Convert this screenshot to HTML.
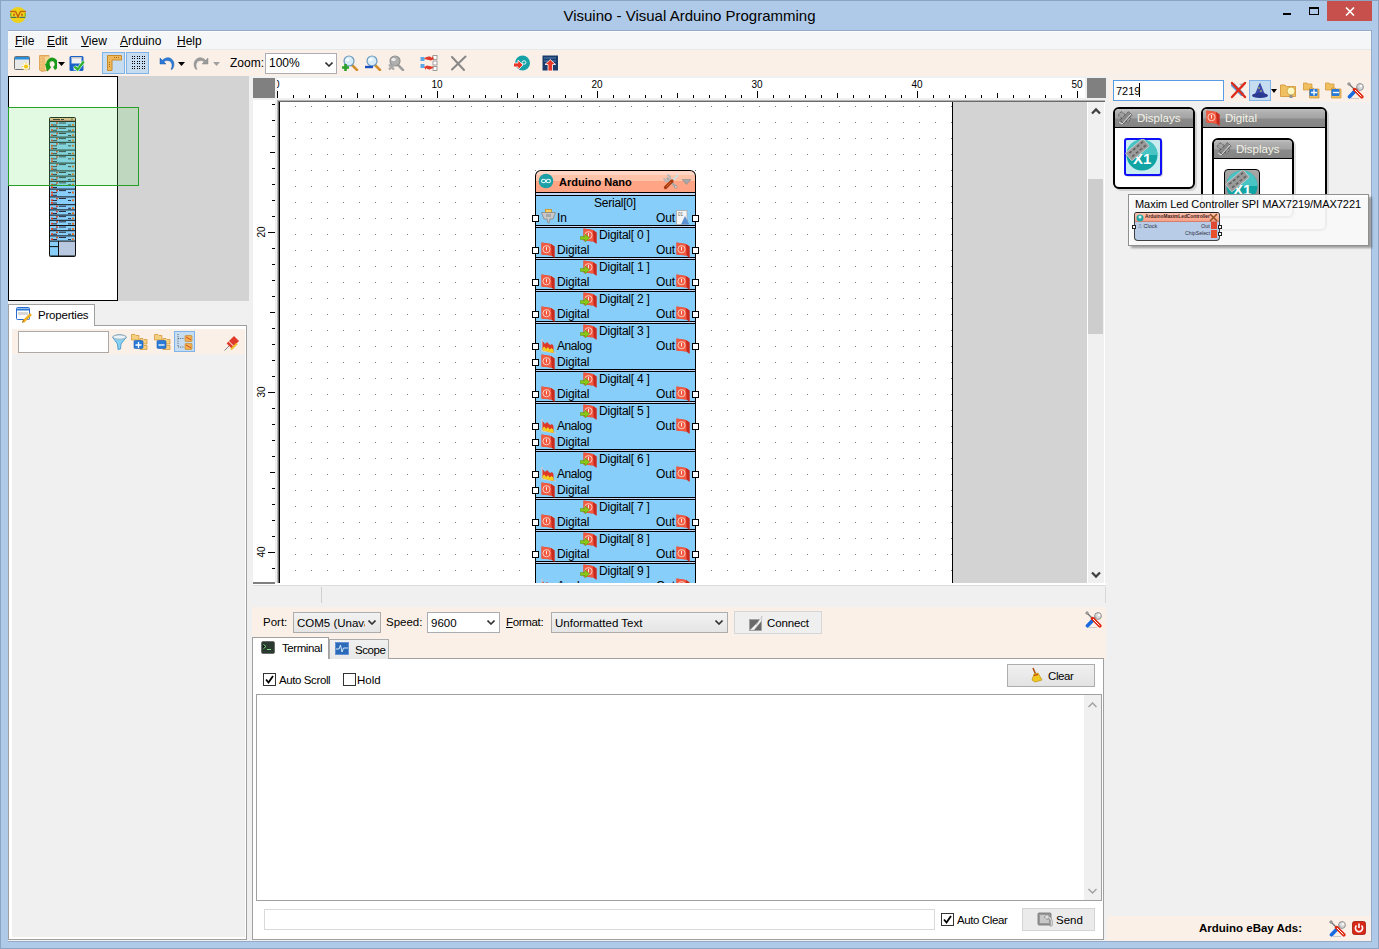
<!DOCTYPE html><html><head><meta charset="utf-8"><style>
*{box-sizing:border-box}
html,body{margin:0;padding:0}
body{width:1379px;height:949px;overflow:hidden;position:relative;background:#afcae8;font-family:"Liberation Sans",sans-serif;font-size:12px;color:#000}
.ab{position:absolute}
.t{position:absolute;white-space:nowrap;line-height:1}
</style></head><body>

<div class="ab" style="left:0;top:0;width:1379px;height:949px;border:1px solid #8aa4c2"></div>
<div class="t" style="left:0;width:1379px;top:8px;text-align:center;font-size:15px;color:#000">Visuino - Visual Arduino Programming</div>
<div class="ab" style="left:1327px;top:1px;width:45px;height:20px;background:#c7504c"></div>
<div class="ab" style="left:8px;top:30px;width:1364px;height:912px;background:#f0f0f0;border:1px solid #93abc7;border-left:none"></div>
<div class="ab" style="left:8px;top:31px;width:1363px;height:19px;background:#f5f6f7;border-top:1px solid #fcfcfd;border-bottom:1px solid #e6e9eb"></div>
<div class="ab" style="left:8px;top:50px;width:1363px;height:26px;background:#fbf0e7"></div>
<div class="ab" style="left:8px;top:76px;width:241px;height:225px;background:#d3d3d3"></div>
<div class="ab" style="left:8px;top:76px;width:110px;height:225px;background:#fff;border:1px solid #000"></div>
<div class="ab" style="left:8px;top:325px;width:239px;height:615px;background:#f0f0f0;border:1px solid #a0a0a0"></div>
<div class="ab" style="left:8px;top:304px;width:87px;height:22px;background:#fff;border:1px solid #a0a0a0;border-bottom:none"></div>
<div class="ab" style="left:12px;top:329px;width:233px;height:25px;background:#fbf0e7"></div>
<div class="ab" style="left:18px;top:331px;width:91px;height:22px;background:#fff;border:1px solid #a9a9a9"></div>
<div class="ab" style="left:253px;top:78px;width:22px;height:20px;background:#808080"></div>
<div class="ab" style="left:277px;top:78px;width:808px;height:20px;background:#fff"></div>
<div class="ab" style="left:1087px;top:78px;width:19px;height:20px;background:#808080"></div>
<div class="ab" style="left:253px;top:100px;width:22px;height:483px;background:#fff"></div>
<div class="ab" style="left:277px;top:100px;width:676px;height:483px;background:#fff"></div>
<div class="ab" style="left:277px;top:100px;width:828px;height:1px;background:#b4b4b4"></div>
<div class="ab" style="left:278px;top:101px;width:827px;height:1px;background:#6a6a6a"></div>
<div class="ab" style="left:277px;top:101px;width:1px;height:482px;background:#b8b8b8"></div>
<div class="ab" style="left:278px;top:102px;width:1px;height:481px;background:#6e6e6e"></div>
<div class="ab" style="left:279px;top:102px;width:1px;height:481px;background:#000"></div>
<div class="ab" style="left:953px;top:102px;width:134px;height:481px;background:#d3d3d3"></div>
<div class="ab" style="left:1088px;top:179px;width:15px;height:155px;background:#cdcdcd"></div>
<div class="ab" style="left:1109px;top:77px;width:261px;height:25px;background:#fbf0e7"></div>
<div class="ab" style="left:1113px;top:80px;width:111px;height:21px;background:#fff;border:1px solid #569de5"></div>
<div class="ab" style="left:1107px;top:916px;width:264px;height:25px;background:#fbf0e7"></div>
<div class="ab" style="left:252px;top:607px;width:854px;height:52px;background:#fbf0e7"></div>
<div class="ab" style="left:252px;top:658px;width:852px;height:282px;background:#fff;border:1px solid #a0a0a0"></div>
<div class="ab" style="left:252px;top:637px;width:77px;height:22px;background:#fff;border:1px solid #a0a0a0;border-bottom:none"></div>
<div class="ab" style="left:256px;top:694px;width:846px;height:207px;background:#fff;border:1px solid #a0a0a0"></div>
<div class="ab" style="left:264px;top:909px;width:671px;height:21px;background:#fff;border:1px solid #d9d9d9"></div>
<div class="t" style="left:15px;top:35.00px;font-size:12px;color:#000;letter-spacing:0px"><span style="text-decoration:underline;text-underline-offset:1px">F</span>ile</div>
<div class="t" style="left:47px;top:35.00px;font-size:12px;color:#000;letter-spacing:0px"><span style="text-decoration:underline;text-underline-offset:1px">E</span>dit</div>
<div class="t" style="left:81px;top:35.00px;font-size:12px;color:#000;letter-spacing:0px"><span style="text-decoration:underline;text-underline-offset:1px">V</span>iew</div>
<div class="t" style="left:120px;top:35.00px;font-size:12px;color:#000;letter-spacing:0px"><span style="text-decoration:underline;text-underline-offset:1px">A</span>rduino</div>
<div class="t" style="left:177px;top:35.00px;font-size:12px;color:#000;letter-spacing:0px"><span style="text-decoration:underline;text-underline-offset:1px">H</span>elp</div>
<svg class="ab" style="left:9px;top:6px" width="18" height="18" viewBox="0 0 18 18">
<circle cx="9" cy="9" r="8" fill="#ecd21a"/>
<rect x="2.5" y="6" width="5" height="5" fill="#f4dc20"/><rect x="10.5" y="6" width="5" height="5" fill="#f4dc20"/>
<path d="M1 5.5 H6.5 L9 10.5 L11.5 5.5 H17" stroke="#c8660c" stroke-width="1.5" fill="none"/>
<path d="M9 9 V12" stroke="#c0600c" stroke-width="1.6"/>
<circle cx="5" cy="8.8" r="1.2" fill="#d07010"/><circle cx="13" cy="8.8" r="1.2" fill="#d07010"/>
<path d="M1.8 11.3 H7.5 M10.5 11.3 H16.2" stroke="#1f5a6a" stroke-width="1"/>
<path d="M1.8 7 V10.5 M16.2 7 V10.5" stroke="#30a030" stroke-width="0.8"/>
</svg>
<div class="ab" style="left:1283px;top:13px;width:8px;height:2px;background:#000"></div>
<div class="ab" style="left:1309px;top:7px;width:10px;height:8px;border:1px solid #000;border-top-width:2px"></div>
<svg class="ab" style="left:1345px;top:7px" width="10" height="9" viewBox="0 0 10 9"><path d="M1 0.5 L9 8.5 M9 0.5 L1 8.5" stroke="#fff" stroke-width="1.6"/></svg>
<svg class="ab" style="left:14px;top:55px" width="17" height="16" viewBox="0 0 17 16">
<rect x="0.5" y="1.5" width="15" height="13" rx="1" fill="#e8e8e8" stroke="#707070"/>
<rect x="1" y="2" width="14" height="2.5" fill="#2a8fd8"/>
<circle cx="12" cy="11.5" r="3.6" fill="#fff"/><circle cx="12" cy="11.5" r="2" fill="#f5c400"/>
<path d="M12 7.5v1.3M12 14.2v1.3M8 11.5h1.3M14.7 11.5h1.3M9.2 8.7l.9.9M13.9 13.4l.9.9M14.8 8.7l-.9.9M9.2 14.3l.9-.9" stroke="#f5c400" stroke-width="0.9"/>
</svg>
<svg class="ab" style="left:39px;top:55px" width="18" height="17" viewBox="0 0 18 17">
<path d="M0.5 0.5 L10 0.5 L10 15 L3 16.5 L0.5 15Z" fill="#eebc70" stroke="#d89a48" stroke-width="0.8"/>
<path d="M6 2 L10 1.5 L10 14 L6 15Z" fill="#f6d898"/>
<path d="M2 2 V14" stroke="#f8e0a0" stroke-width="0.8" stroke-dasharray="1 2"/>
<path d="M9.5 11.5 A4.2 4.8 0 1 1 15 13.5" stroke="#1a9a1a" stroke-width="3.6" fill="none"/>
<path d="M6 8.5 L12.5 12 L8 16.5Z" fill="#1a9a1a"/>
<path d="M10 8 L12.5 6" stroke="#80d080" stroke-width="0.8"/>
</svg>
<svg class="ab" style="left:58px;top:62px" width="7" height="4" viewBox="0 0 7 4"><path d="M0 0h7L3.5 4z" fill="#000"/></svg>
<svg class="ab" style="left:69px;top:55px" width="16" height="17" viewBox="0 0 16 17">
<rect x="0.5" y="1" width="14" height="15" rx="1.5" fill="#1a62c8"/>
<rect x="2.5" y="2" width="10" height="6.5" fill="#f2f2f2"/><rect x="2.5" y="2" width="10" height="1.5" fill="#c8c8c8"/>
<rect x="4" y="11" width="7" height="5" fill="#4a8ae0"/><rect x="5" y="12" width="2" height="3" fill="#e0e8f8"/>
<path d="M5.5 11.5 L8.5 14.5 L14.8 6.5" stroke="#e8ffe8" stroke-width="3.4" fill="none"/>
<path d="M5.5 11.5 L8.5 14.5 L14.8 6.5" stroke="#30b030" stroke-width="2.2" fill="none"/>
</svg>
<div class="ab" style="left:102px;top:52px;width:23px;height:22px;background:#c6dcf1;border:1px solid #7eb4ea"></div>
<div class="ab" style="left:126px;top:52px;width:23px;height:22px;background:#c6dcf1;border:1px solid #7eb4ea"></div>
<svg class="ab" style="left:107px;top:55px" width="15" height="16" viewBox="0 0 15 16">
<path d="M0.5 0.5 H14.5 V5 H5 V15.5 H0.5 Z" fill="#eeb75a" stroke="#c98a2a"/>
<path d="M7 2.5h1M9 2.5h1M11 2.5h1M2.5 7v1M2.5 9v1M2.5 11v1" stroke="#a86a10" stroke-width="1"/>
</svg>
<svg class="ab" style="left:132px;top:56px" width="14" height="14" viewBox="0 0 14 14" fill="#000"><rect x="0" y="0" width="1" height="1"/><rect x="0" y="2" width="1" height="1"/><rect x="0" y="5" width="1" height="1"/><rect x="0" y="7" width="1" height="1"/><rect x="0" y="10" width="1" height="1"/><rect x="0" y="12" width="1" height="1"/><rect x="2" y="0" width="1" height="1"/><rect x="2" y="2" width="1" height="1"/><rect x="2" y="5" width="1" height="1"/><rect x="2" y="7" width="1" height="1"/><rect x="2" y="10" width="1" height="1"/><rect x="2" y="12" width="1" height="1"/><rect x="5" y="0" width="1" height="1"/><rect x="5" y="2" width="1" height="1"/><rect x="5" y="5" width="1" height="1"/><rect x="5" y="7" width="1" height="1"/><rect x="5" y="10" width="1" height="1"/><rect x="5" y="12" width="1" height="1"/><rect x="7" y="0" width="1" height="1"/><rect x="7" y="2" width="1" height="1"/><rect x="7" y="5" width="1" height="1"/><rect x="7" y="7" width="1" height="1"/><rect x="7" y="10" width="1" height="1"/><rect x="7" y="12" width="1" height="1"/><rect x="10" y="0" width="1" height="1"/><rect x="10" y="2" width="1" height="1"/><rect x="10" y="5" width="1" height="1"/><rect x="10" y="7" width="1" height="1"/><rect x="10" y="10" width="1" height="1"/><rect x="10" y="12" width="1" height="1"/><rect x="12" y="0" width="1" height="1"/><rect x="12" y="2" width="1" height="1"/><rect x="12" y="5" width="1" height="1"/><rect x="12" y="7" width="1" height="1"/><rect x="12" y="10" width="1" height="1"/><rect x="12" y="12" width="1" height="1"/></svg>
<svg class="ab" style="left:158px;top:55px" width="17" height="15" viewBox="0 0 17 15">
<path d="M2 3 L2 9 L8 9 L5.8 6.8 C8 5 12 5 13.5 8 C14.5 10 14 12 13 14.5 L14.5 14 C16.5 11 16.5 7 14 4.5 C11.5 2 7.5 2 4.3 5.3 Z" fill="#2a7ad8" stroke="#1a5aaa" stroke-width="0.5"/>
</svg>
<svg class="ab" style="left:178px;top:62px" width="7" height="4" viewBox="0 0 7 4"><path d="M0 0h7L3.5 4z" fill="#000"/></svg>
<svg class="ab" style="left:193px;top:55px" width="17" height="15" viewBox="0 0 17 15">
<path d="M15 3 L15 9 L9 9 L11.2 6.8 C9 5 5 5 3.5 8 C2.5 10 3 12 4 14.5 L2.5 14 C0.5 11 0.5 7 3 4.5 C5.5 2 9.5 2 12.7 5.3 Z" fill="#9a9a9a" stroke="#8a8a8a" stroke-width="0.5"/>
</svg>
<svg class="ab" style="left:213px;top:62px" width="7" height="4" viewBox="0 0 7 4"><path d="M0 0h7L3.5 4z" fill="#a0a0a0"/></svg>
<div class="t" style="left:230px;top:57.00px;font-size:12px;color:#000;font-weight:normal;letter-spacing:0px;">Zoom:</div>
<div class="ab" style="left:265px;top:53px;width:72px;height:21px;background:#fff;border:1px solid #abadb3"></div>
<div class="t" style="left:269px;top:57.00px;font-size:12px;color:#000;font-weight:normal;letter-spacing:0px;">100%</div>
<svg class="ab" style="left:325px;top:62px" width="8" height="5" viewBox="0 0 8 5"><path d="M0.5 0.5 L4 4 L7.5 0.5" stroke="#333" stroke-width="1.6" fill="none"/></svg>
<svg class="ab" style="left:342px;top:55px" width="17" height="16" viewBox="0 0 17 16">
<path d="M9.5 9.5 L15 15" stroke="#d09030" stroke-width="2.5" stroke-linecap="round"/>
<circle cx="7" cy="6" r="5" fill="#d8ecf8" stroke="#6a9ac0" stroke-width="1.2"/>
<ellipse cx="5.5" cy="4.5" rx="2.2" ry="1.5" fill="#fff" opacity="0.8"/>
<path d="M0 12.5h7M3.5 9v7" stroke="#2aa02a" stroke-width="2.6"/></svg>
<svg class="ab" style="left:365px;top:55px" width="17" height="16" viewBox="0 0 17 16">
<path d="M9.5 9.5 L15 15" stroke="#d09030" stroke-width="2.5" stroke-linecap="round"/>
<circle cx="7" cy="6" r="5" fill="#d8ecf8" stroke="#6a9ac0" stroke-width="1.2"/>
<ellipse cx="5.5" cy="4.5" rx="2.2" ry="1.5" fill="#fff" opacity="0.8"/>
<path d="M0 12h8" stroke="#1a50c0" stroke-width="2.4"/></svg>
<svg class="ab" style="left:388px;top:55px" width="17" height="16" viewBox="0 0 17 16">
<path d="M9.5 9.5 L15 15" stroke="#a0a0a0" stroke-width="2.5" stroke-linecap="round"/>
<circle cx="7" cy="6" r="5" fill="#b0b0b0" stroke="#909090" stroke-width="1.2"/>
<ellipse cx="5.5" cy="4.5" rx="2.2" ry="1.5" fill="#fff" opacity="0.8"/>
<path d="M1 9.5l5 5M6 9.5l-5 5" stroke="#a8a8a8" stroke-width="2.4"/></svg>
<svg class="ab" style="left:420px;top:55px" width="18" height="16" viewBox="0 0 18 16">
<rect x="13" y="0.5" width="4" height="4" fill="#fff" stroke="#8a8a8a" stroke-width="0.8"/>
<rect x="13" y="6" width="4" height="4" fill="#fff" stroke="#8a8a8a" stroke-width="0.8"/>
<rect x="13" y="11.5" width="4" height="4" fill="#fff" stroke="#8a8a8a" stroke-width="0.8"/>
<rect x="0.5" y="2" width="4" height="4" fill="#5aa8e8"/>
<rect x="0.5" y="9" width="4" height="4" fill="#5aa8e8"/>
<path d="M4 4 C7 1 10 1 12 3 L12 1 L14 4 L11 5.5Z" fill="#e03a2a"/>
<path d="M14 12 C11 15 8 15 6 13 L6 15 L4 12 L7 10.5Z" fill="#e03a2a"/>
</svg>
<svg class="ab" style="left:450px;top:55px" width="17" height="16" viewBox="0 0 17 16">
<path d="M2 2 L14 15 M15.5 1.5 L2 14.5" stroke="#888" stroke-width="2" stroke-linecap="round"/>
</svg>
<svg class="ab" style="left:513px;top:55px" width="18" height="17" viewBox="0 0 18 17">
<circle cx="9.5" cy="8" r="7.5" fill="#16a0a8"/>
<path d="M9 7.5 a2 1.7 0 1 0 4 0 a2 1.7 0 1 0 -4 0" stroke="#e8f8f8" stroke-width="1" fill="none"/>
<path d="M0.5 8 H5 V5 L10 10 L5 15 V12 H0.5 Z" fill="#e8382a" stroke="#fff" stroke-width="0.8"/>
</svg>
<svg class="ab" style="left:542px;top:55px" width="17" height="17" viewBox="0 0 17 17">
<rect x="0.5" y="0.5" width="15.5" height="15" fill="#1a3a6a"/>
<path d="M2 3h12M2 6h4M10 6h4M3 9h2M12 9h2" stroke="#6a9ad0" stroke-width="0.8"/>
<path d="M8.3 4.5 L13.5 9.5 H10.5 V16 H6 V9.5 H3 Z" fill="#e8382a" stroke="#fff" stroke-width="0.8"/>
</svg>
<svg class="ab" style="left:253px;top:78px" width="853" height="506" viewBox="0 0 853 506"><path d="M24.5 13 V20" stroke="#000" stroke-width="1"/><path d="M40.5 17 V20" stroke="#000" stroke-width="1"/><path d="M56.5 17 V20" stroke="#000" stroke-width="1"/><path d="M72.5 17 V20" stroke="#000" stroke-width="1"/><path d="M88.5 17 V20" stroke="#000" stroke-width="1"/><path d="M104.5 15 V20" stroke="#000" stroke-width="1"/><path d="M120.5 17 V20" stroke="#000" stroke-width="1"/><path d="M136.5 17 V20" stroke="#000" stroke-width="1"/><path d="M152.5 17 V20" stroke="#000" stroke-width="1"/><path d="M168.5 17 V20" stroke="#000" stroke-width="1"/><path d="M184.5 13 V20" stroke="#000" stroke-width="1"/><path d="M200.5 17 V20" stroke="#000" stroke-width="1"/><path d="M216.5 17 V20" stroke="#000" stroke-width="1"/><path d="M232.5 17 V20" stroke="#000" stroke-width="1"/><path d="M248.5 17 V20" stroke="#000" stroke-width="1"/><path d="M264.5 15 V20" stroke="#000" stroke-width="1"/><path d="M280.5 17 V20" stroke="#000" stroke-width="1"/><path d="M296.5 17 V20" stroke="#000" stroke-width="1"/><path d="M312.5 17 V20" stroke="#000" stroke-width="1"/><path d="M328.5 17 V20" stroke="#000" stroke-width="1"/><path d="M344.5 13 V20" stroke="#000" stroke-width="1"/><path d="M360.5 17 V20" stroke="#000" stroke-width="1"/><path d="M376.5 17 V20" stroke="#000" stroke-width="1"/><path d="M392.5 17 V20" stroke="#000" stroke-width="1"/><path d="M408.5 17 V20" stroke="#000" stroke-width="1"/><path d="M424.5 15 V20" stroke="#000" stroke-width="1"/><path d="M440.5 17 V20" stroke="#000" stroke-width="1"/><path d="M456.5 17 V20" stroke="#000" stroke-width="1"/><path d="M472.5 17 V20" stroke="#000" stroke-width="1"/><path d="M488.5 17 V20" stroke="#000" stroke-width="1"/><path d="M504.5 13 V20" stroke="#000" stroke-width="1"/><path d="M520.5 17 V20" stroke="#000" stroke-width="1"/><path d="M536.5 17 V20" stroke="#000" stroke-width="1"/><path d="M552.5 17 V20" stroke="#000" stroke-width="1"/><path d="M568.5 17 V20" stroke="#000" stroke-width="1"/><path d="M584.5 15 V20" stroke="#000" stroke-width="1"/><path d="M600.5 17 V20" stroke="#000" stroke-width="1"/><path d="M616.5 17 V20" stroke="#000" stroke-width="1"/><path d="M632.5 17 V20" stroke="#000" stroke-width="1"/><path d="M648.5 17 V20" stroke="#000" stroke-width="1"/><path d="M664.5 13 V20" stroke="#000" stroke-width="1"/><path d="M680.5 17 V20" stroke="#000" stroke-width="1"/><path d="M696.5 17 V20" stroke="#000" stroke-width="1"/><path d="M712.5 17 V20" stroke="#000" stroke-width="1"/><path d="M728.5 17 V20" stroke="#000" stroke-width="1"/><path d="M744.5 15 V20" stroke="#000" stroke-width="1"/><path d="M760.5 17 V20" stroke="#000" stroke-width="1"/><path d="M776.5 17 V20" stroke="#000" stroke-width="1"/><path d="M792.5 17 V20" stroke="#000" stroke-width="1"/><path d="M808.5 17 V20" stroke="#000" stroke-width="1"/><path d="M824.5 13 V20" stroke="#000" stroke-width="1"/><path d="M19 26.5 H22" stroke="#000" stroke-width="1"/><path d="M19 42.5 H22" stroke="#000" stroke-width="1"/><path d="M19 58.5 H22" stroke="#000" stroke-width="1"/><path d="M17 74.5 H22" stroke="#000" stroke-width="1"/><path d="M19 90.5 H22" stroke="#000" stroke-width="1"/><path d="M19 106.5 H22" stroke="#000" stroke-width="1"/><path d="M19 122.5 H22" stroke="#000" stroke-width="1"/><path d="M19 138.5 H22" stroke="#000" stroke-width="1"/><path d="M15 154.5 H22" stroke="#000" stroke-width="1"/><path d="M19 170.5 H22" stroke="#000" stroke-width="1"/><path d="M19 186.5 H22" stroke="#000" stroke-width="1"/><path d="M19 202.5 H22" stroke="#000" stroke-width="1"/><path d="M19 218.5 H22" stroke="#000" stroke-width="1"/><path d="M17 234.5 H22" stroke="#000" stroke-width="1"/><path d="M19 250.5 H22" stroke="#000" stroke-width="1"/><path d="M19 266.5 H22" stroke="#000" stroke-width="1"/><path d="M19 282.5 H22" stroke="#000" stroke-width="1"/><path d="M19 298.5 H22" stroke="#000" stroke-width="1"/><path d="M15 314.5 H22" stroke="#000" stroke-width="1"/><path d="M19 330.5 H22" stroke="#000" stroke-width="1"/><path d="M19 346.5 H22" stroke="#000" stroke-width="1"/><path d="M19 362.5 H22" stroke="#000" stroke-width="1"/><path d="M19 378.5 H22" stroke="#000" stroke-width="1"/><path d="M17 394.5 H22" stroke="#000" stroke-width="1"/><path d="M19 410.5 H22" stroke="#000" stroke-width="1"/><path d="M19 426.5 H22" stroke="#000" stroke-width="1"/><path d="M19 442.5 H22" stroke="#000" stroke-width="1"/><path d="M19 458.5 H22" stroke="#000" stroke-width="1"/><path d="M15 474.5 H22" stroke="#000" stroke-width="1"/><path d="M19 490.5 H22" stroke="#000" stroke-width="1"/></svg>
<div class="t" style="left:422px;width:30px;text-align:center;top:79.5px;font-size:10px;color:#000">10</div>
<div class="t" style="left:582px;width:30px;text-align:center;top:79.5px;font-size:10px;color:#000">20</div>
<div class="t" style="left:742px;width:30px;text-align:center;top:79.5px;font-size:10px;color:#000">30</div>
<div class="t" style="left:902px;width:30px;text-align:center;top:79.5px;font-size:10px;color:#000">40</div>
<div class="t" style="left:1062px;width:30px;text-align:center;top:79.5px;font-size:10px;color:#000">50</div>
<div class="ab" style="left:277px;top:78px;width:4px;height:12px;overflow:hidden"><div class="t" style="left:-3px;top:1.5px;font-size:10px">0</div></div>
<div class="t" style="left:246.5px;width:30px;text-align:center;top:227px;font-size:10px;transform:rotate(-90deg)">20</div>
<div class="t" style="left:246.5px;width:30px;text-align:center;top:387px;font-size:10px;transform:rotate(-90deg)">30</div>
<div class="t" style="left:246.5px;width:30px;text-align:center;top:547px;font-size:10px;transform:rotate(-90deg)">40</div>
<svg class="ab" style="left:280px;top:102px" width="672" height="481"><defs><pattern id="gd" x="15" y="4" width="16" height="16" patternUnits="userSpaceOnUse"><rect x="0" y="0" width="1" height="1" fill="#7a7a7a"/></pattern></defs><rect width="672" height="481" fill="url(#gd)"/></svg>
<div class="ab" style="left:952px;top:102px;width:1px;height:481px;background:#000"></div>
<svg width="0" height="0" style="position:absolute"><defs>
<symbol id="dig" viewBox="0 0 14 16">
<path d="M0.5 0.5 L10 2 L13.5 4.5 L13.5 15.8 L10.5 13.5 L0.5 12.5 Z" fill="#e8402c"/>
<path d="M10 2 L13.5 4.5 L13.5 15.8 L10.5 13.5 Z" fill="#c82a1e"/>
<path d="M0.5 0.5 L10 2 L10.5 13.5 L0.5 12.5Z" fill="#f05a40"/>
<circle cx="5.5" cy="7.2" r="3.6" fill="none" stroke="#ffd8d0" stroke-width="0.9"/>
<path d="M5.5 4.8 V8.5" stroke="#ffe8e0" stroke-width="1"/>
</symbol>
<symbol id="ana" viewBox="0 0 16 16">
<path d="M1 1 L1 13 L15 15" stroke="#e0d0c8" stroke-width="1" fill="none"/>
<path d="M1.5 3 L4 6 L6 4 L9 7 L11 6 L12.5 8 L12.5 15 L1.5 12Z" fill="#e03828"/>
<path d="M1.5 10 L3.5 8.5 L5 11 L7 9 L8.5 11.5 L10.5 10 L12.5 12 L12.5 15 L1.5 12.5Z" fill="#f0d020"/>
</symbol>
<symbol id="ttl" viewBox="0 0 17 16">
<use href="#dig" x="3" y="0" width="14" height="16"/>
<path d="M0.5 8.5 H5 V6 L9.5 10 L5 14 V11.5 H0.5Z" fill="#8ac818" stroke="#5a9a10" stroke-width="0.6"/>
</symbol>
<symbol id="pin" viewBox="0 0 7 7"><rect x="0.5" y="0.5" width="6" height="6" fill="#fff" stroke="#000" stroke-width="1"/></symbol>
</defs></svg>
<div class="ab" style="left:0;top:0;width:952px;height:583px;overflow:hidden">
<div class="ab" style="left:535px;top:170px;width:161px;height:413px;background:#000;border-radius:6px 6px 0 0;overflow:hidden">
<div class="ab" style="left:1px;top:1px;width:159px;height:21px;border-radius:5px 5px 0 0;background:linear-gradient(#ffd6c6 0,#ffd6c6 4px,#ffc3aa 4px,#ffc3aa 10px,#ffa484 10px,#ffa484 21px)"></div>
<div class="ab" style="left:1px;top:23px;width:159px;height:2px;background:#c3d6f5"></div>
<div class="ab" style="left:1px;top:26px;width:159px;height:29px;background:#87cefa"></div>
<div class="ab" style="left:1px;top:56px;width:159px;height:1px;background:#c3d6f5"></div>
<div class="ab" style="left:1px;top:58px;width:159px;height:29px;background:#87cefa"></div>
<div class="ab" style="left:1px;top:88px;width:159px;height:1px;background:#c3d6f5"></div>
<div class="ab" style="left:1px;top:90px;width:159px;height:29px;background:#87cefa"></div>
<div class="ab" style="left:1px;top:120px;width:159px;height:1px;background:#c3d6f5"></div>
<div class="ab" style="left:1px;top:122px;width:159px;height:29px;background:#87cefa"></div>
<div class="ab" style="left:1px;top:152px;width:159px;height:1px;background:#c3d6f5"></div>
<div class="ab" style="left:1px;top:154px;width:159px;height:45px;background:#87cefa"></div>
<div class="ab" style="left:1px;top:200px;width:159px;height:1px;background:#c3d6f5"></div>
<div class="ab" style="left:1px;top:202px;width:159px;height:29px;background:#87cefa"></div>
<div class="ab" style="left:1px;top:232px;width:159px;height:1px;background:#c3d6f5"></div>
<div class="ab" style="left:1px;top:234px;width:159px;height:45px;background:#87cefa"></div>
<div class="ab" style="left:1px;top:280px;width:159px;height:1px;background:#c3d6f5"></div>
<div class="ab" style="left:1px;top:282px;width:159px;height:45px;background:#87cefa"></div>
<div class="ab" style="left:1px;top:328px;width:159px;height:1px;background:#c3d6f5"></div>
<div class="ab" style="left:1px;top:330px;width:159px;height:29px;background:#87cefa"></div>
<div class="ab" style="left:1px;top:360px;width:159px;height:1px;background:#c3d6f5"></div>
<div class="ab" style="left:1px;top:362px;width:159px;height:29px;background:#87cefa"></div>
<div class="ab" style="left:1px;top:392px;width:159px;height:1px;background:#c3d6f5"></div>
<div class="ab" style="left:1px;top:394px;width:159px;height:45px;background:#87cefa"></div>
<div class="ab" style="left:1px;top:440px;width:159px;height:1px;background:#c3d6f5"></div>
</div>
<svg class="ab" style="left:538px;top:173px" width="16" height="16" viewBox="0 0 16 16">
<circle cx="8" cy="8" r="7.3" fill="#1aa0a6"/>
<path d="M3.6 8 a2 1.8 0 1 0 4 0 a2 1.8 0 1 0 -4 0 M8.4 8 a2 1.8 0 1 0 4 0 a2 1.8 0 1 0 -4 0" stroke="#e8ffff" stroke-width="1.1" fill="none"/>
</svg>
<div class="t" style="left:559px;top:177.00px;font-size:11px;font-weight:bold;color:#000;letter-spacing:0px">Arduino Nano</div>
<svg class="ab" style="left:663px;top:174px" width="16" height="16" viewBox="0 0 16 16">
<path d="M4.5 4.5 L12.5 12.5" stroke="#a8a8a8" stroke-width="2.4" stroke-linecap="round"/>
<circle cx="12.8" cy="12.8" r="1.4" fill="#d8d8d8" stroke="#808080" stroke-width="0.6"/>
<path d="M1.2 4 A3 3 0 1 0 4 1.2" stroke="#b8b8b8" stroke-width="2" fill="none"/>
<path d="M14.5 1.5 L9 7" stroke="#c8e0e0" stroke-width="1.8" stroke-linecap="round"/>
<path d="M9 7 L2.5 13.5" stroke="#a83a10" stroke-width="3.2" stroke-linecap="round"/>
<path d="M8 8 L3.5 12.5" stroke="#e07040" stroke-width="0.8"/>
</svg>
<svg class="ab" style="left:682px;top:179px" width="9" height="6" viewBox="0 0 9 6"><path d="M0 0.5 H9 L4.5 5.5Z" fill="#a8a8a8" stroke="#808080" stroke-width="0.5"/></svg>
<div class="t" style="left:555px;width:120px;text-align:center;top:197.00px;font-size:12px;font-weight:normal;color:#000;letter-spacing:-0.25px">Serial[0]</div>
<svg class="ab" style="left:541px;top:209px" width="15" height="16" viewBox="0 0 15 16">
<rect x="4.5" y="0.5" width="6" height="3" fill="#f8d060" stroke="#d09020" stroke-width="0.8"/>
<path d="M0.5 3.5 H14.5 L12 10 L9 10 L8 14 L7 14 L6 10 L3 10Z" fill="#c8c8c8" stroke="#888" stroke-width="0.8"/>
<rect x="5" y="5" width="5" height="3" fill="#a8a8a8"/>
</svg>
<div class="t" style="left:557px;top:212.00px;font-size:12px;font-weight:normal;color:#000;letter-spacing:0px">In</div>
<div class="t" style="left:656px;top:212.00px;font-size:12px;font-weight:normal;color:#000;letter-spacing:-0.1px">Out</div>
<svg class="ab" style="left:676px;top:210px" width="14" height="15" viewBox="0 0 14 15">
<path d="M0.5 0.5 H11 V14.5 H0.5Z" fill="#f4f4f4" stroke="#a8a8a8" stroke-width="0.8"/>
<path d="M5 14.5 L9 6 L13.5 14.5Z" fill="#5a90d0"/>
<text x="2" y="6" font-size="4.5" fill="#606060" font-family="Liberation Sans">01</text>
</svg>
<svg class="ab" style="left:532px;top:215px" width="7" height="7"><use href="#pin" width="7" height="7"/></svg>
<svg class="ab" style="left:692px;top:215px" width="7" height="7"><use href="#pin" width="7" height="7"/></svg>
<div class="t" style="left:599px;top:229.00px;font-size:12px;font-weight:normal;color:#000;letter-spacing:-0.22px">Digital[ 0 ]</div>
<svg class="ab" style="left:580px;top:228px" width="17" height="16"><use href="#ttl" width="17" height="16"/></svg>
<svg class="ab" style="left:541px;top:242px" width="14" height="16"><use href="#dig" width="14" height="16"/></svg>
<div class="t" style="left:557px;top:244.00px;font-size:12px;font-weight:normal;color:#000;letter-spacing:-0.15px">Digital</div>
<div class="t" style="left:656px;top:244.00px;font-size:12px;font-weight:normal;color:#000;letter-spacing:-0.1px">Out</div>
<svg class="ab" style="left:676px;top:242px" width="14" height="16"><use href="#dig" width="14" height="16"/></svg>
<svg class="ab" style="left:532px;top:247px" width="7" height="7"><use href="#pin" width="7" height="7"/></svg>
<svg class="ab" style="left:692px;top:247px" width="7" height="7"><use href="#pin" width="7" height="7"/></svg>
<div class="t" style="left:599px;top:261.00px;font-size:12px;font-weight:normal;color:#000;letter-spacing:-0.22px">Digital[ 1 ]</div>
<svg class="ab" style="left:580px;top:260px" width="17" height="16"><use href="#ttl" width="17" height="16"/></svg>
<svg class="ab" style="left:541px;top:274px" width="14" height="16"><use href="#dig" width="14" height="16"/></svg>
<div class="t" style="left:557px;top:276.00px;font-size:12px;font-weight:normal;color:#000;letter-spacing:-0.15px">Digital</div>
<div class="t" style="left:656px;top:276.00px;font-size:12px;font-weight:normal;color:#000;letter-spacing:-0.1px">Out</div>
<svg class="ab" style="left:676px;top:274px" width="14" height="16"><use href="#dig" width="14" height="16"/></svg>
<svg class="ab" style="left:532px;top:279px" width="7" height="7"><use href="#pin" width="7" height="7"/></svg>
<svg class="ab" style="left:692px;top:279px" width="7" height="7"><use href="#pin" width="7" height="7"/></svg>
<div class="t" style="left:599px;top:293.00px;font-size:12px;font-weight:normal;color:#000;letter-spacing:-0.22px">Digital[ 2 ]</div>
<svg class="ab" style="left:580px;top:292px" width="17" height="16"><use href="#ttl" width="17" height="16"/></svg>
<svg class="ab" style="left:541px;top:306px" width="14" height="16"><use href="#dig" width="14" height="16"/></svg>
<div class="t" style="left:557px;top:308.00px;font-size:12px;font-weight:normal;color:#000;letter-spacing:-0.15px">Digital</div>
<div class="t" style="left:656px;top:308.00px;font-size:12px;font-weight:normal;color:#000;letter-spacing:-0.1px">Out</div>
<svg class="ab" style="left:676px;top:306px" width="14" height="16"><use href="#dig" width="14" height="16"/></svg>
<svg class="ab" style="left:532px;top:311px" width="7" height="7"><use href="#pin" width="7" height="7"/></svg>
<svg class="ab" style="left:692px;top:311px" width="7" height="7"><use href="#pin" width="7" height="7"/></svg>
<div class="t" style="left:599px;top:325.00px;font-size:12px;font-weight:normal;color:#000;letter-spacing:-0.22px">Digital[ 3 ]</div>
<svg class="ab" style="left:580px;top:324px" width="17" height="16"><use href="#ttl" width="17" height="16"/></svg>
<svg class="ab" style="left:541px;top:338px" width="16" height="16"><use href="#ana" width="16" height="16"/></svg>
<div class="t" style="left:557px;top:340.00px;font-size:12px;font-weight:normal;color:#000;letter-spacing:-0.45px">Analog</div>
<div class="t" style="left:656px;top:340.00px;font-size:12px;font-weight:normal;color:#000;letter-spacing:-0.1px">Out</div>
<svg class="ab" style="left:676px;top:338px" width="14" height="16"><use href="#dig" width="14" height="16"/></svg>
<svg class="ab" style="left:541px;top:354px" width="14" height="16"><use href="#dig" width="14" height="16"/></svg>
<div class="t" style="left:557px;top:356.00px;font-size:12px;font-weight:normal;color:#000;letter-spacing:-0.15px">Digital</div>
<svg class="ab" style="left:532px;top:343px" width="7" height="7"><use href="#pin" width="7" height="7"/></svg>
<svg class="ab" style="left:692px;top:343px" width="7" height="7"><use href="#pin" width="7" height="7"/></svg>
<svg class="ab" style="left:532px;top:359px" width="7" height="7"><use href="#pin" width="7" height="7"/></svg>
<div class="t" style="left:599px;top:373.00px;font-size:12px;font-weight:normal;color:#000;letter-spacing:-0.22px">Digital[ 4 ]</div>
<svg class="ab" style="left:580px;top:372px" width="17" height="16"><use href="#ttl" width="17" height="16"/></svg>
<svg class="ab" style="left:541px;top:386px" width="14" height="16"><use href="#dig" width="14" height="16"/></svg>
<div class="t" style="left:557px;top:388.00px;font-size:12px;font-weight:normal;color:#000;letter-spacing:-0.15px">Digital</div>
<div class="t" style="left:656px;top:388.00px;font-size:12px;font-weight:normal;color:#000;letter-spacing:-0.1px">Out</div>
<svg class="ab" style="left:676px;top:386px" width="14" height="16"><use href="#dig" width="14" height="16"/></svg>
<svg class="ab" style="left:532px;top:391px" width="7" height="7"><use href="#pin" width="7" height="7"/></svg>
<svg class="ab" style="left:692px;top:391px" width="7" height="7"><use href="#pin" width="7" height="7"/></svg>
<div class="t" style="left:599px;top:405.00px;font-size:12px;font-weight:normal;color:#000;letter-spacing:-0.22px">Digital[ 5 ]</div>
<svg class="ab" style="left:580px;top:404px" width="17" height="16"><use href="#ttl" width="17" height="16"/></svg>
<svg class="ab" style="left:541px;top:418px" width="16" height="16"><use href="#ana" width="16" height="16"/></svg>
<div class="t" style="left:557px;top:420.00px;font-size:12px;font-weight:normal;color:#000;letter-spacing:-0.45px">Analog</div>
<div class="t" style="left:656px;top:420.00px;font-size:12px;font-weight:normal;color:#000;letter-spacing:-0.1px">Out</div>
<svg class="ab" style="left:676px;top:418px" width="14" height="16"><use href="#dig" width="14" height="16"/></svg>
<svg class="ab" style="left:541px;top:434px" width="14" height="16"><use href="#dig" width="14" height="16"/></svg>
<div class="t" style="left:557px;top:436.00px;font-size:12px;font-weight:normal;color:#000;letter-spacing:-0.15px">Digital</div>
<svg class="ab" style="left:532px;top:423px" width="7" height="7"><use href="#pin" width="7" height="7"/></svg>
<svg class="ab" style="left:692px;top:423px" width="7" height="7"><use href="#pin" width="7" height="7"/></svg>
<svg class="ab" style="left:532px;top:439px" width="7" height="7"><use href="#pin" width="7" height="7"/></svg>
<div class="t" style="left:599px;top:453.00px;font-size:12px;font-weight:normal;color:#000;letter-spacing:-0.22px">Digital[ 6 ]</div>
<svg class="ab" style="left:580px;top:452px" width="17" height="16"><use href="#ttl" width="17" height="16"/></svg>
<svg class="ab" style="left:541px;top:466px" width="16" height="16"><use href="#ana" width="16" height="16"/></svg>
<div class="t" style="left:557px;top:468.00px;font-size:12px;font-weight:normal;color:#000;letter-spacing:-0.45px">Analog</div>
<div class="t" style="left:656px;top:468.00px;font-size:12px;font-weight:normal;color:#000;letter-spacing:-0.1px">Out</div>
<svg class="ab" style="left:676px;top:466px" width="14" height="16"><use href="#dig" width="14" height="16"/></svg>
<svg class="ab" style="left:541px;top:482px" width="14" height="16"><use href="#dig" width="14" height="16"/></svg>
<div class="t" style="left:557px;top:484.00px;font-size:12px;font-weight:normal;color:#000;letter-spacing:-0.15px">Digital</div>
<svg class="ab" style="left:532px;top:471px" width="7" height="7"><use href="#pin" width="7" height="7"/></svg>
<svg class="ab" style="left:692px;top:471px" width="7" height="7"><use href="#pin" width="7" height="7"/></svg>
<svg class="ab" style="left:532px;top:487px" width="7" height="7"><use href="#pin" width="7" height="7"/></svg>
<div class="t" style="left:599px;top:501.00px;font-size:12px;font-weight:normal;color:#000;letter-spacing:-0.22px">Digital[ 7 ]</div>
<svg class="ab" style="left:580px;top:500px" width="17" height="16"><use href="#ttl" width="17" height="16"/></svg>
<svg class="ab" style="left:541px;top:514px" width="14" height="16"><use href="#dig" width="14" height="16"/></svg>
<div class="t" style="left:557px;top:516.00px;font-size:12px;font-weight:normal;color:#000;letter-spacing:-0.15px">Digital</div>
<div class="t" style="left:656px;top:516.00px;font-size:12px;font-weight:normal;color:#000;letter-spacing:-0.1px">Out</div>
<svg class="ab" style="left:676px;top:514px" width="14" height="16"><use href="#dig" width="14" height="16"/></svg>
<svg class="ab" style="left:532px;top:519px" width="7" height="7"><use href="#pin" width="7" height="7"/></svg>
<svg class="ab" style="left:692px;top:519px" width="7" height="7"><use href="#pin" width="7" height="7"/></svg>
<div class="t" style="left:599px;top:533.00px;font-size:12px;font-weight:normal;color:#000;letter-spacing:-0.22px">Digital[ 8 ]</div>
<svg class="ab" style="left:580px;top:532px" width="17" height="16"><use href="#ttl" width="17" height="16"/></svg>
<svg class="ab" style="left:541px;top:546px" width="14" height="16"><use href="#dig" width="14" height="16"/></svg>
<div class="t" style="left:557px;top:548.00px;font-size:12px;font-weight:normal;color:#000;letter-spacing:-0.15px">Digital</div>
<div class="t" style="left:656px;top:548.00px;font-size:12px;font-weight:normal;color:#000;letter-spacing:-0.1px">Out</div>
<svg class="ab" style="left:676px;top:546px" width="14" height="16"><use href="#dig" width="14" height="16"/></svg>
<svg class="ab" style="left:532px;top:551px" width="7" height="7"><use href="#pin" width="7" height="7"/></svg>
<svg class="ab" style="left:692px;top:551px" width="7" height="7"><use href="#pin" width="7" height="7"/></svg>
<div class="t" style="left:599px;top:565.00px;font-size:12px;font-weight:normal;color:#000;letter-spacing:-0.22px">Digital[ 9 ]</div>
<svg class="ab" style="left:580px;top:564px" width="17" height="16"><use href="#ttl" width="17" height="16"/></svg>
<svg class="ab" style="left:541px;top:578px" width="16" height="16"><use href="#ana" width="16" height="16"/></svg>
<div class="t" style="left:557px;top:580.00px;font-size:12px;font-weight:normal;color:#000;letter-spacing:-0.45px">Analog</div>
<div class="t" style="left:656px;top:580.00px;font-size:12px;font-weight:normal;color:#000;letter-spacing:-0.1px">Out</div>
<svg class="ab" style="left:676px;top:578px" width="14" height="16"><use href="#dig" width="14" height="16"/></svg>
<svg class="ab" style="left:541px;top:594px" width="14" height="16"><use href="#dig" width="14" height="16"/></svg>
<div class="t" style="left:557px;top:596.00px;font-size:12px;font-weight:normal;color:#000;letter-spacing:-0.15px">Digital</div>
<svg class="ab" style="left:532px;top:583px" width="7" height="7"><use href="#pin" width="7" height="7"/></svg>
<svg class="ab" style="left:692px;top:583px" width="7" height="7"><use href="#pin" width="7" height="7"/></svg>
<svg class="ab" style="left:532px;top:599px" width="7" height="7"><use href="#pin" width="7" height="7"/></svg>
</div>
<div class="t" style="left:263px;top:617.00px;font-size:11.5px;color:#000;font-weight:normal;letter-spacing:0px;">Port:</div>
<div class="ab" style="left:293px;top:612px;width:88px;height:21px;background:linear-gradient(#f2f2f2,#e5e5e5);border:1px solid #acacac"></div>
<div class="t" style="left:297px;top:618px;font-size:11.5px;width:68px;overflow:hidden">COM5 (Unava</div>
<svg class="ab" style="left:368px;top:620px" width="8" height="5" viewBox="0 0 8 5"><path d="M0.5 0.5 L4 4 L7.5 0.5" stroke="#333" stroke-width="1.6" fill="none"/></svg>
<div class="t" style="left:386px;top:617.00px;font-size:11.5px;color:#000;font-weight:normal;letter-spacing:0px;">Speed:</div>
<div class="ab" style="left:427px;top:612px;width:73px;height:21px;background:#fff;border:1px solid #abadb3"></div>
<div class="t" style="left:431px;top:618px;font-size:11.5px;width:53px;overflow:hidden">9600</div>
<svg class="ab" style="left:487px;top:620px" width="8" height="5" viewBox="0 0 8 5"><path d="M0.5 0.5 L4 4 L7.5 0.5" stroke="#333" stroke-width="1.6" fill="none"/></svg>
<div class="t" style="left:506px;top:617.00px;font-size:11.5px;color:#000;letter-spacing:-0.33px"><span style="text-decoration:underline;text-underline-offset:1px">F</span>ormat:</div>
<div class="ab" style="left:551px;top:612px;width:177px;height:21px;background:linear-gradient(#f2f2f2,#e5e5e5);border:1px solid #acacac"></div>
<div class="t" style="left:555px;top:618px;font-size:11.5px;width:157px;overflow:hidden">Unformatted Text</div>
<svg class="ab" style="left:715px;top:620px" width="8" height="5" viewBox="0 0 8 5"><path d="M0.5 0.5 L4 4 L7.5 0.5" stroke="#333" stroke-width="1.6" fill="none"/></svg>
<div class="ab" style="left:734px;top:611px;width:88px;height:23px;background:#efefef;border:1px solid #d6d6d6"></div>
<svg class="ab" style="left:748px;top:615px" width="16" height="17" viewBox="0 0 16 17">
<rect x="1.5" y="4.5" width="12" height="11" fill="#6a6a6a" stroke="#a0a0a0" stroke-width="0.8"/>
<path d="M2 15 L9 8 L8 10 L14 1 L13.5 6 L6 15Z" fill="#f4f4f4" stroke="#b0b0b0" stroke-width="0.5"/>
</svg>
<div class="t" style="left:767px;top:618.00px;font-size:11.5px;color:#000;font-weight:normal;letter-spacing:-0.15px;">Connect</div>
<svg class="ab" style="left:1085px;top:611px" width="17" height="17" viewBox="0 0 17 17">
<path d="M2 2 L8 8" stroke="#707070" stroke-width="1.2"/><circle cx="2" cy="2" r="1.2" fill="#d0d0d0" stroke="#707070" stroke-width="0.8"/>
<path d="M4 16.5 H12" stroke="#c0c0c0" stroke-width="0.8"/>
<path d="M8 9 L2.5 14.8" stroke="#1a6ae0" stroke-width="3.6" stroke-linecap="round"/>
<circle cx="13" cy="5" r="3.4" fill="#d8d8d8" stroke="#909090" stroke-width="1"/><circle cx="14" cy="4" r="1.3" fill="#f8f8f8"/>
<path d="M8.5 8 L11 6" stroke="#a0a0a0" stroke-width="2"/>
<path d="M7.6 7.6 L14.8 14.8" stroke="#e02a10" stroke-width="3.6" stroke-linecap="round"/>
<path d="M8 8 L14.5 14.5" stroke="#fff" stroke-width="1"/>
</svg>
<div class="ab" style="left:329px;top:639px;width:60px;height:20px;background:linear-gradient(#f0f0f0,#e8e8e8);border:1px solid #acacac;border-bottom:none"></div>
<div class="ab" style="left:253px;top:659px;width:76px;height:2px;background:#fff"></div>
<svg class="ab" style="left:261px;top:641px" width="14" height="13" viewBox="0 0 14 13">
<rect x="0.5" y="0.5" width="13" height="12" rx="1.5" fill="#2a3a30" stroke="#606060" stroke-width="0.8"/>
<path d="M2.5 3.5 L5 5.5 L2.5 7.5 M6 8.5 H10" stroke="#80e080" stroke-width="1"/>
</svg>
<div class="t" style="left:282px;top:643.00px;font-size:11.5px;color:#000;font-weight:normal;letter-spacing:-0.43px;">Terminal</div>
<svg class="ab" style="left:335px;top:642px" width="14" height="13" viewBox="0 0 14 13">
<rect x="0.5" y="0.5" width="13" height="12" fill="#2a6ab8" stroke="#5a8ad0" stroke-width="0.8"/>
<path d="M1 7 H4 L5.5 3 L7 10 L8.5 6 H13" stroke="#e0f0ff" stroke-width="0.9" fill="none"/>
</svg>
<div class="t" style="left:355px;top:645.00px;font-size:11.5px;color:#000;font-weight:normal;letter-spacing:-0.4px;">Scope</div>
<div class="ab" style="left:263px;top:673px;width:13px;height:13px;background:#fff;border:1px solid #333"></div>
<svg class="ab" style="left:265px;top:675px" width="9" height="9" viewBox="0 0 9 9"><path d="M1 4.5 L3.5 7.5 L8 1" stroke="#000" stroke-width="1.8" fill="none"/></svg>
<div class="t" style="left:279px;top:675.00px;font-size:11.5px;color:#000;font-weight:normal;letter-spacing:-0.4px;">Auto Scroll</div>
<div class="ab" style="left:343px;top:673px;width:13px;height:13px;background:#fff;border:1px solid #333"></div>
<div class="t" style="left:357px;top:675.00px;font-size:11.5px;color:#000;font-weight:normal;letter-spacing:0px;">Hold</div>
<div class="ab" style="left:1007px;top:664px;width:88px;height:23px;background:linear-gradient(#f0f0f0,#e3e3e3);border:1px solid #adadad"></div>
<svg class="ab" style="left:1029px;top:667px" width="15" height="16" viewBox="0 0 15 16">
<path d="M4 1 L7 8" stroke="#b05010" stroke-width="1.6"/>
<path d="M5 7 L9 6 L13 13 L6 15 L3 13Z" fill="#f0c820" stroke="#c09010" stroke-width="0.7"/>
<path d="M5 8.5 L9 7.5" stroke="#c02010" stroke-width="1"/>
</svg>
<div class="t" style="left:1048px;top:671.00px;font-size:11.5px;color:#000;font-weight:normal;letter-spacing:-0.4px;">Clear</div>
<div class="ab" style="left:1084px;top:695px;width:17px;height:205px;background:#f0f0f0"></div>
<svg class="ab" style="left:1088px;top:702px" width="9" height="6" viewBox="0 0 9 6"><path d="M0.5 5 L4.5 1 L8.5 5" stroke="#a0a0a0" stroke-width="1.4" fill="none"/></svg>
<svg class="ab" style="left:1088px;top:888px" width="9" height="6" viewBox="0 0 9 6"><path d="M0.5 1 L4.5 5 L8.5 1" stroke="#a0a0a0" stroke-width="1.4" fill="none"/></svg>
<div class="ab" style="left:941px;top:913px;width:13px;height:13px;background:#fff;border:1px solid #333"></div>
<svg class="ab" style="left:943px;top:915px" width="9" height="9" viewBox="0 0 9 9"><path d="M1 4.5 L3.5 7.5 L8 1" stroke="#000" stroke-width="1.8" fill="none"/></svg>
<div class="t" style="left:957px;top:915.00px;font-size:11.5px;color:#000;font-weight:normal;letter-spacing:-0.4px;">Auto Clear</div>
<div class="ab" style="left:1022px;top:908px;width:73px;height:23px;background:#ebebeb;border:1px solid #d4d4d4"></div>
<svg class="ab" style="left:1037px;top:912px" width="17" height="16" viewBox="0 0 17 16">
<rect x="1" y="1" width="13" height="12" rx="1" fill="#9a9a9a" stroke="#707070" stroke-width="0.8"/>
<rect x="3" y="3" width="9" height="8" fill="#c8c8c8"/>
<path d="M7 5 L11 8 L11 6 C13 6 14 9 13 14 L15 14 C16 9 15 5 11 4 L11 2Z" fill="#e0e0e0" stroke="#808080" stroke-width="0.6"/>
</svg>
<div class="t" style="left:1056px;top:915.00px;font-size:11.5px;color:#000;font-weight:normal;letter-spacing:0px;">Send</div>
<div class="ab" style="left:321px;top:587px;width:1px;height:16px;background:#d0d0d0"></div>
<svg class="ab" style="left:1230px;top:81px" width="17" height="18" viewBox="0 0 17 18">
<path d="M3 4 L12 13" stroke="#5a9ad8" stroke-width="4" stroke-linecap="round"/>
<path d="M9 3 L14 2 L13 7" fill="#b0b0b0"/>
<path d="M2 2 L15 16 M15 2 L2 16" stroke="#e02a1a" stroke-width="2.4" stroke-linecap="round"/>
</svg>
<div class="ab" style="left:1249px;top:80px;width:22px;height:21px;background:#c6dcf1;border:1px solid #7eb4ea"></div>
<svg class="ab" style="left:1251px;top:82px" width="18" height="17" viewBox="0 0 18 17">
<path d="M9 0.5 C7 4 6 8 4 12 L14 12 C12 9 11 5 9 0.5Z" fill="#3a4aa8"/>
<ellipse cx="9" cy="13.5" rx="8" ry="2.5" fill="#2a3a90"/>
<circle cx="8" cy="6" r="0.8" fill="#f0e040"/><circle cx="10" cy="9" r="0.8" fill="#f0e040"/>
</svg>
<svg class="ab" style="left:1271px;top:89px" width="6" height="4" viewBox="0 0 6 4"><path d="M0 0h6L3 4z" fill="#000"/></svg>
<svg class="ab" style="left:1280px;top:82px" width="17" height="17" viewBox="0 0 17 17">
<path d="M0.5 3 H5 L6.5 4.5 H15.5 V14.5 H0.5Z" fill="#f0c060" stroke="#d09030" stroke-width="0.8"/>
<circle cx="11" cy="9" r="4" fill="#fff8c0" stroke="#c8a040" stroke-width="0.8"/><rect x="9.5" y="13" width="3" height="3" fill="#909090"/></svg>
<svg class="ab" style="left:1303px;top:82px" width="17" height="17" viewBox="0 0 17 17">
<path d="M0.5 1 H4 L5 2 H9 V8 H0.5Z" fill="#f0c060" stroke="#d09030" stroke-width="0.7"/>
<path d="M6.5 6 H10 L11 7 H16 V16 H6.5Z" fill="#f0c060" stroke="#d09030" stroke-width="0.7"/>
<rect x="6.5" y="7" width="8" height="7" rx="1" fill="#2a7ad8"/><path d="M8 10.5 H14 M11 7.5 V13.5" stroke="#fff" stroke-width="1.3"/>
</svg>
<svg class="ab" style="left:1325px;top:82px" width="17" height="17" viewBox="0 0 17 17">
<path d="M0.5 1 H4 L5 2 H9 V8 H0.5Z" fill="#f0c060" stroke="#d09030" stroke-width="0.7"/>
<path d="M6.5 6 H10 L11 7 H16 V16 H6.5Z" fill="#f0c060" stroke="#d09030" stroke-width="0.7"/>
<rect x="6.5" y="7" width="8" height="7" rx="1" fill="#2a7ad8"/><path d="M8 10.5 H14" stroke="#fff" stroke-width="1.3"/>
</svg>
<svg class="ab" style="left:1347px;top:82px" width="17" height="17" viewBox="0 0 17 17">
<path d="M2 2 L8 8" stroke="#707070" stroke-width="1.2"/><circle cx="2" cy="2" r="1.2" fill="#d0d0d0" stroke="#707070" stroke-width="0.8"/>
<path d="M4 16.5 H12" stroke="#c0c0c0" stroke-width="0.8"/>
<path d="M8 9 L2.5 14.8" stroke="#1a6ae0" stroke-width="3.6" stroke-linecap="round"/>
<circle cx="13" cy="5" r="3.4" fill="#d8d8d8" stroke="#909090" stroke-width="1"/><circle cx="14" cy="4" r="1.3" fill="#f8f8f8"/>
<path d="M8.5 8 L11 6" stroke="#a0a0a0" stroke-width="2"/>
<path d="M7.6 7.6 L14.8 14.8" stroke="#e02a10" stroke-width="3.6" stroke-linecap="round"/>
<path d="M8 8 L14.5 14.5" stroke="#fff" stroke-width="1"/>
</svg>
<div class="t" style="left:1116px;top:86.00px;font-size:11px;color:#000;font-weight:normal;letter-spacing:0px;">7219</div>
<div class="ab" style="left:1139px;top:83px;width:1px;height:14px;background:#000"></div>
<div class="ab" style="left:1115px;top:109px;width:82px;height:82px;border-radius:6px;background:rgba(0,0,0,0.12)"></div>
<div class="ab" style="left:1113px;top:107px;width:82px;height:82px;border-radius:6px;border:2px solid #000;background:#fff;overflow:hidden">
<div class="ab" style="left:0;top:0;width:78px;height:19px;background:linear-gradient(#c0c0c0 0,#b0b0b0 3px,#a4a4a4 9px,#8a8a8a 10px,#848484 18px);border-bottom:1px solid #000"></div>
</div>
<div class="t" style="left:1137px;top:113px;font-size:11.5px;color:#f4f4e8">Displays</div>
<svg class="ab" style="left:1117px;top:110px" width="16" height="16" viewBox="0 0 16 16">
<g transform="rotate(35 8 8)"><rect x="1" y="5" width="12" height="5" fill="#a0a0a0" stroke="#303030" stroke-width="0.7" stroke-dasharray="1 1"/></g>
<g transform="rotate(-45 8 8)"><rect x="3" y="6" width="12" height="5" fill="#888" stroke="#202020" stroke-width="0.7" stroke-dasharray="1 1"/></g>
<path d="M2 12 L5 14 L14 4" stroke="#e0e0e0" stroke-width="1" fill="none"/>
</svg>
<div class="ab" style="left:1203px;top:109px;width:126px;height:124px;border-radius:6px;background:rgba(0,0,0,0.12)"></div>
<div class="ab" style="left:1201px;top:107px;width:126px;height:124px;border-radius:6px;border:2px solid #000;background:#fff;overflow:hidden">
<div class="ab" style="left:0;top:0;width:122px;height:19px;background:linear-gradient(#c0c0c0 0,#b0b0b0 3px,#a4a4a4 9px,#8a8a8a 10px,#848484 18px);border-bottom:1px solid #000"></div>
</div>
<div class="t" style="left:1225px;top:113px;font-size:11.5px;color:#f4f4e8">Digital</div>
<svg class="ab" style="left:1206px;top:110px" width="14" height="16"><use href="#dig" width="14" height="16"/></svg>
<div class="ab" style="left:1214px;top:140px;width:82px;height:80px;border-radius:6px;background:rgba(0,0,0,0.12)"></div>
<div class="ab" style="left:1212px;top:138px;width:82px;height:80px;border-radius:6px;border:2px solid #000;background:#fff;overflow:hidden">
<div class="ab" style="left:0;top:0;width:78px;height:19px;background:linear-gradient(#c0c0c0 0,#b0b0b0 3px,#a4a4a4 9px,#8a8a8a 10px,#848484 18px);border-bottom:1px solid #000"></div>
</div>
<div class="t" style="left:1236px;top:144px;font-size:11.5px;color:#f4f4e8">Displays</div>
<svg class="ab" style="left:1216px;top:141px" width="16" height="16" viewBox="0 0 16 16">
<g transform="rotate(35 8 8)"><rect x="1" y="5" width="12" height="5" fill="#a0a0a0" stroke="#303030" stroke-width="0.7" stroke-dasharray="1 1"/></g>
<g transform="rotate(-45 8 8)"><rect x="3" y="6" width="12" height="5" fill="#888" stroke="#202020" stroke-width="0.7" stroke-dasharray="1 1"/></g>
<path d="M2 12 L5 14 L14 4" stroke="#e0e0e0" stroke-width="1" fill="none"/>
</svg>
<div class="ab" style="left:1126px;top:140px;width:37px;height:37px;background:rgba(0,0,0,0.15);border-radius:3px"></div>
<div class="ab" style="left:1124px;top:138px;width:38px;height:38px;border:2px solid #1010f8;border-radius:3px;background:#c8ecf0"></div>
<svg class="ab" style="left:1125px;top:139px" width="36" height="36" viewBox="0 0 36 36">
<circle cx="17" cy="16" r="15.5" fill="#10a4a4"/>
<path d="M1.5 16 A15.5 15.5 0 0 1 32.5 16Z" fill="#48c4c4"/>
<text x="8" y="25" font-size="15" font-weight="bold" fill="#fff" font-family="Liberation Sans">X1</text>
<g transform="rotate(-40 12 11)"><rect x="1" y="6" width="23" height="10" rx="1" fill="#9a9a9a" stroke="#d0d0d0" stroke-width="0.8"/>
<path d="M4 8.5h3M9 8.5h3M14 8.5h3M19 8.5h3M4 13h3M9 13h3M14 13h3M19 13h3" stroke="#606060" stroke-width="1.6"/></g>
</svg>
<div class="ab" style="left:1224px;top:169px;width:36px;height:36px;border:1px solid #000;border-radius:4px;background:linear-gradient(#a8a8a8,#888)"></div>
<svg class="ab" style="left:1225px;top:170px" width="36" height="36" viewBox="0 0 36 36">
<circle cx="17" cy="16" r="15.5" fill="#10a4a4"/>
<path d="M1.5 16 A15.5 15.5 0 0 1 32.5 16Z" fill="#48c4c4"/>
<text x="8" y="25" font-size="15" font-weight="bold" fill="#fff" font-family="Liberation Sans">X1</text>
<g transform="rotate(-40 12 11)"><rect x="1" y="6" width="23" height="10" rx="1" fill="#9a9a9a" stroke="#d0d0d0" stroke-width="0.8"/>
<path d="M4 8.5h3M9 8.5h3M14 8.5h3M19 8.5h3M4 13h3M9 13h3M14 13h3M19 13h3" stroke="#606060" stroke-width="1.6"/></g>
</svg>
<div class="ab" style="left:1131px;top:197px;width:241px;height:51px;background:rgba(0,0,0,0.35);filter:blur(1px)"></div>
<div class="ab" style="left:1128px;top:194px;width:241px;height:52px;background:rgba(255,255,255,0.93);border:1px solid #909090"></div>
<div class="t" style="left:1135px;top:199.00px;font-size:11px;color:#000;font-weight:normal;letter-spacing:-0.05px;">Maxim Led Controller SPI MAX7219/MAX7221</div>
<div class="ab" style="left:1134px;top:212px;width:86px;height:29px;border:1px solid #404040;border-top-color:#202020;border-radius:3px 3px 4px 4px;background:#b8cce8;overflow:hidden">
<div class="ab" style="left:0;top:0;width:84px;height:9px;background:linear-gradient(#ffc4b0,#f8a088);border-bottom:1px solid #d08070"></div>
</div>
<svg class="ab" style="left:1136px;top:214px" width="8" height="8"><circle cx="4" cy="4" r="3.5" fill="#20a8a8"/><circle cx="4" cy="3" r="1.5" fill="#e0f0f0"/></svg>
<div class="t" style="left:1145px;top:215px;font-size:4.8px;font-weight:bold;color:#402020;letter-spacing:0px">ArduinoMaximLedController</div>
<svg class="ab" style="left:1209px;top:213px" width="9" height="9"><path d="M1 1 L8 8 M8 1 L1 8" stroke="#905020" stroke-width="1.6"/></svg>
<div class="t" style="left:1138px;top:223.5px;font-size:5.5px;color:#303040">⎍ Clock</div>
<div class="t" style="left:1201px;top:223.5px;font-size:5.5px;color:#303040">Out</div>
<div class="t" style="left:1185px;top:231px;font-size:5.2px;color:#303040">ChipSelect</div>
<div class="ab" style="left:1211px;top:222px;width:6px;height:7px;background:#e04a30"></div>
<div class="ab" style="left:1211px;top:230px;width:6px;height:8px;background:#e8502c"></div>
<div class="ab" style="left:1132px;top:225px;width:4px;height:4px;border:1px solid #202020;background:#fff"></div>
<div class="ab" style="left:1218px;top:225px;width:4px;height:4px;border:1px solid #202020;background:#fff"></div>
<div class="ab" style="left:1218px;top:232px;width:4px;height:4px;border:1px solid #202020;background:#fff"></div>
<div class="ab" style="left:49px;top:117px;width:27px;height:140px;background:#101010;border-radius:2px"></div>
<svg class="ab" style="left:50px;top:118px" width="25" height="138" viewBox="0 0 25 138"><rect x="0" y="0" width="25" height="3" fill="#f0b890"/><rect x="0" y="2" width="25" height="1" fill="#d08070"/><rect x="3" y="1" width="7" height="1" fill="#302020"/><rect x="11" y="1" width="3" height="1" fill="#302020"/><rect x="21" y="0.5" width="2" height="2" fill="#808060"/><rect x="0" y="4.00" width="25" height="4.20" fill="#87cefa"/><rect x="9" y="4.60" width="7" height="0.9" fill="#202030"/><rect x="6" y="4.30" width="2" height="1.6" fill="#d05030"/><rect x="3" y="6.60" width="4" height="0.9" fill="#202030"/><rect x="1" y="6.00" width="2" height="1.8" fill="#e04020"/><rect x="18" y="6.60" width="3" height="0.9" fill="#202030"/><rect x="22" y="6.00" width="2" height="1.8" fill="#e07020"/><rect x="0" y="9.20" width="25" height="4.20" fill="#87cefa"/><rect x="9" y="9.80" width="7" height="0.9" fill="#202030"/><rect x="6" y="9.50" width="2" height="1.6" fill="#d05030"/><rect x="3" y="11.80" width="4" height="0.9" fill="#202030"/><rect x="1" y="11.20" width="2" height="1.8" fill="#e04020"/><rect x="18" y="11.80" width="3" height="0.9" fill="#202030"/><rect x="22" y="11.20" width="2" height="1.8" fill="#e07020"/><rect x="0" y="14.40" width="25" height="4.20" fill="#87cefa"/><rect x="9" y="15.00" width="7" height="0.9" fill="#202030"/><rect x="6" y="14.70" width="2" height="1.6" fill="#d05030"/><rect x="3" y="17.00" width="4" height="0.9" fill="#202030"/><rect x="1" y="16.40" width="2" height="1.8" fill="#e04020"/><rect x="18" y="17.00" width="3" height="0.9" fill="#202030"/><rect x="22" y="16.40" width="2" height="1.8" fill="#e07020"/><rect x="0" y="19.60" width="25" height="4.20" fill="#87cefa"/><rect x="9" y="20.20" width="7" height="0.9" fill="#202030"/><rect x="6" y="19.90" width="2" height="1.6" fill="#d05030"/><rect x="3" y="22.20" width="4" height="0.9" fill="#202030"/><rect x="1" y="21.60" width="2" height="1.8" fill="#e04020"/><rect x="18" y="22.20" width="3" height="0.9" fill="#202030"/><rect x="22" y="21.60" width="2" height="1.8" fill="#e07020"/><rect x="0" y="24.80" width="25" height="6.80" fill="#87cefa"/><rect x="9" y="25.40" width="7" height="0.9" fill="#202030"/><rect x="6" y="25.10" width="2" height="1.6" fill="#d05030"/><rect x="3" y="27.40" width="4" height="0.9" fill="#202030"/><rect x="1" y="26.80" width="2" height="1.8" fill="#e04020"/><rect x="3" y="30.00" width="4" height="0.9" fill="#202030"/><rect x="1" y="29.40" width="2" height="1.8" fill="#e04020"/><rect x="18" y="27.40" width="3" height="0.9" fill="#202030"/><rect x="22" y="26.80" width="2" height="1.8" fill="#e07020"/><rect x="0" y="32.60" width="25" height="4.20" fill="#87cefa"/><rect x="9" y="33.20" width="7" height="0.9" fill="#202030"/><rect x="6" y="32.90" width="2" height="1.6" fill="#d05030"/><rect x="3" y="35.20" width="4" height="0.9" fill="#202030"/><rect x="1" y="34.60" width="2" height="1.8" fill="#e04020"/><rect x="18" y="35.20" width="3" height="0.9" fill="#202030"/><rect x="22" y="34.60" width="2" height="1.8" fill="#e07020"/><rect x="0" y="37.80" width="25" height="6.80" fill="#87cefa"/><rect x="9" y="38.40" width="7" height="0.9" fill="#202030"/><rect x="6" y="38.10" width="2" height="1.6" fill="#d05030"/><rect x="3" y="40.40" width="4" height="0.9" fill="#202030"/><rect x="1" y="39.80" width="2" height="1.8" fill="#e04020"/><rect x="3" y="43.00" width="4" height="0.9" fill="#202030"/><rect x="1" y="42.40" width="2" height="1.8" fill="#e04020"/><rect x="18" y="40.40" width="3" height="0.9" fill="#202030"/><rect x="22" y="39.80" width="2" height="1.8" fill="#e07020"/><rect x="0" y="45.60" width="25" height="6.80" fill="#87cefa"/><rect x="9" y="46.20" width="7" height="0.9" fill="#202030"/><rect x="6" y="45.90" width="2" height="1.6" fill="#d05030"/><rect x="3" y="48.20" width="4" height="0.9" fill="#202030"/><rect x="1" y="47.60" width="2" height="1.8" fill="#e04020"/><rect x="3" y="50.80" width="4" height="0.9" fill="#202030"/><rect x="1" y="50.20" width="2" height="1.8" fill="#e04020"/><rect x="18" y="48.20" width="3" height="0.9" fill="#202030"/><rect x="22" y="47.60" width="2" height="1.8" fill="#e07020"/><rect x="0" y="53.40" width="25" height="4.20" fill="#87cefa"/><rect x="9" y="54.00" width="7" height="0.9" fill="#202030"/><rect x="6" y="53.70" width="2" height="1.6" fill="#d05030"/><rect x="3" y="56.00" width="4" height="0.9" fill="#202030"/><rect x="1" y="55.40" width="2" height="1.8" fill="#e04020"/><rect x="18" y="56.00" width="3" height="0.9" fill="#202030"/><rect x="22" y="55.40" width="2" height="1.8" fill="#e07020"/><rect x="0" y="58.60" width="25" height="4.20" fill="#87cefa"/><rect x="9" y="59.20" width="7" height="0.9" fill="#202030"/><rect x="6" y="58.90" width="2" height="1.6" fill="#d05030"/><rect x="3" y="61.20" width="4" height="0.9" fill="#202030"/><rect x="1" y="60.60" width="2" height="1.8" fill="#e04020"/><rect x="18" y="61.20" width="3" height="0.9" fill="#202030"/><rect x="22" y="60.60" width="2" height="1.8" fill="#e07020"/><rect x="0" y="63.80" width="25" height="6.80" fill="#87cefa"/><rect x="9" y="64.40" width="7" height="0.9" fill="#202030"/><rect x="6" y="64.10" width="2" height="1.6" fill="#d05030"/><rect x="3" y="66.40" width="4" height="0.9" fill="#202030"/><rect x="1" y="65.80" width="2" height="1.8" fill="#e04020"/><rect x="3" y="69.00" width="4" height="0.9" fill="#202030"/><rect x="1" y="68.40" width="2" height="1.8" fill="#e04020"/><rect x="18" y="66.40" width="3" height="0.9" fill="#202030"/><rect x="22" y="65.80" width="2" height="1.8" fill="#e07020"/><rect x="0" y="71.60" width="25" height="6.80" fill="#87cefa"/><rect x="9" y="72.20" width="7" height="0.9" fill="#202030"/><rect x="6" y="71.90" width="2" height="1.6" fill="#d05030"/><rect x="3" y="74.20" width="4" height="0.9" fill="#202030"/><rect x="1" y="73.60" width="2" height="1.8" fill="#e04020"/><rect x="3" y="76.80" width="4" height="0.9" fill="#202030"/><rect x="1" y="76.20" width="2" height="1.8" fill="#e04020"/><rect x="18" y="74.20" width="3" height="0.9" fill="#202030"/><rect x="22" y="73.60" width="2" height="1.8" fill="#e07020"/><rect x="0" y="79.40" width="25" height="6.80" fill="#87cefa"/><rect x="9" y="80.00" width="7" height="0.9" fill="#202030"/><rect x="6" y="79.70" width="2" height="1.6" fill="#d05030"/><rect x="3" y="82.00" width="4" height="0.9" fill="#202030"/><rect x="1" y="81.40" width="2" height="1.8" fill="#e04020"/><rect x="3" y="84.60" width="4" height="0.9" fill="#202030"/><rect x="1" y="84.00" width="2" height="1.8" fill="#e04020"/><rect x="18" y="82.00" width="3" height="0.9" fill="#202030"/><rect x="22" y="81.40" width="2" height="1.8" fill="#e07020"/><rect x="0" y="87.20" width="25" height="4.20" fill="#87cefa"/><rect x="9" y="87.80" width="7" height="0.9" fill="#202030"/><rect x="6" y="87.50" width="2" height="1.6" fill="#d05030"/><rect x="3" y="89.80" width="4" height="0.9" fill="#202030"/><rect x="1" y="89.20" width="2" height="1.8" fill="#e04020"/><rect x="18" y="89.80" width="3" height="0.9" fill="#202030"/><rect x="22" y="89.20" width="2" height="1.8" fill="#e07020"/><rect x="0" y="92.40" width="25" height="4.20" fill="#87cefa"/><rect x="9" y="93.00" width="7" height="0.9" fill="#202030"/><rect x="6" y="92.70" width="2" height="1.6" fill="#d05030"/><rect x="3" y="95.00" width="4" height="0.9" fill="#202030"/><rect x="1" y="94.40" width="2" height="1.8" fill="#e04020"/><rect x="18" y="95.00" width="3" height="0.9" fill="#202030"/><rect x="22" y="94.40" width="2" height="1.8" fill="#e07020"/><rect x="0" y="97.60" width="25" height="4.20" fill="#87cefa"/><rect x="9" y="98.20" width="7" height="0.9" fill="#202030"/><rect x="6" y="97.90" width="2" height="1.6" fill="#d05030"/><rect x="3" y="100.20" width="4" height="0.9" fill="#202030"/><rect x="1" y="99.60" width="2" height="1.8" fill="#e04020"/><rect x="18" y="100.20" width="3" height="0.9" fill="#202030"/><rect x="22" y="99.60" width="2" height="1.8" fill="#e07020"/><rect x="0" y="102.80" width="25" height="4.20" fill="#87cefa"/><rect x="9" y="103.40" width="7" height="0.9" fill="#202030"/><rect x="6" y="103.10" width="2" height="1.6" fill="#d05030"/><rect x="3" y="105.40" width="4" height="0.9" fill="#202030"/><rect x="1" y="104.80" width="2" height="1.8" fill="#e04020"/><rect x="18" y="105.40" width="3" height="0.9" fill="#202030"/><rect x="22" y="104.80" width="2" height="1.8" fill="#e07020"/><rect x="0" y="108.00" width="25" height="4.20" fill="#87cefa"/><rect x="9" y="108.60" width="7" height="0.9" fill="#202030"/><rect x="6" y="108.30" width="2" height="1.6" fill="#d05030"/><rect x="3" y="110.60" width="4" height="0.9" fill="#202030"/><rect x="1" y="110.00" width="2" height="1.8" fill="#e04020"/><rect x="18" y="110.60" width="3" height="0.9" fill="#202030"/><rect x="22" y="110.00" width="2" height="1.8" fill="#e07020"/><rect x="0" y="113.20" width="25" height="4.20" fill="#87cefa"/><rect x="9" y="113.80" width="7" height="0.9" fill="#202030"/><rect x="6" y="113.50" width="2" height="1.6" fill="#d05030"/><rect x="3" y="115.80" width="4" height="0.9" fill="#202030"/><rect x="1" y="115.20" width="2" height="1.8" fill="#e04020"/><rect x="18" y="115.80" width="3" height="0.9" fill="#202030"/><rect x="22" y="115.20" width="2" height="1.8" fill="#e07020"/><rect x="0" y="118.40" width="25" height="4.20" fill="#87cefa"/><rect x="9" y="119.00" width="7" height="0.9" fill="#202030"/><rect x="6" y="118.70" width="2" height="1.6" fill="#d05030"/><rect x="3" y="121.00" width="4" height="0.9" fill="#202030"/><rect x="1" y="120.40" width="2" height="1.8" fill="#e04020"/><rect x="18" y="121.00" width="3" height="0.9" fill="#202030"/><rect x="22" y="120.40" width="2" height="1.8" fill="#e07020"/><rect x="0" y="123.60" width="8" height="13.90" fill="#87cefa"/><rect x="9" y="123.60" width="16" height="13.90" fill="#b8c8e0"/><rect x="0" y="128.10" width="8" height="1" fill="#101010"/></svg>
<div class="ab" style="left:8px;top:107px;width:131px;height:79px;background:rgba(120,230,120,0.22);border:1px solid #28a028"></div>
<svg class="ab" style="left:16px;top:307px" width="17" height="16" viewBox="0 0 17 16"><rect x="0.5" y="0.5" width="13" height="12" rx="1" fill="#fff" stroke="#2a6ad0" stroke-width="1"/><rect x="1" y="1.5" width="12" height="2" fill="#2a7ad8"/><rect x="2" y="5" width="10" height="3" fill="#d8d8d8"/><path d="M7 15 L15 7" stroke="#f0b020" stroke-width="2.6"/><path d="M6.5 15.5 L7.5 13.5" stroke="#806020" stroke-width="1"/></svg>
<div class="t" style="left:38px;top:310.00px;font-size:11.5px;color:#000;font-weight:normal;letter-spacing:-0.2px;">Properties</div>
<div class="ab" style="left:9px;top:326px;width:237px;height:613px;background:#fff"></div>
<div class="ab" style="left:12px;top:354px;width:233px;height:583px;background:#f0f0f0"></div>
<div class="ab" style="left:12px;top:329px;width:233px;height:25px;background:#fbf0e7"></div>
<div class="ab" style="left:18px;top:331px;width:91px;height:22px;background:#fff;border:1px solid #a9a9a9"></div>
<svg class="ab" style="left:112px;top:334px" width="15" height="16" viewBox="0 0 15 16">
<path d="M0.5 3 C3 0 12 0 14.5 3 L9 10 L8.5 15 L6 15.5 L5.5 10Z" fill="#8ad0f0" stroke="#3a90c8" stroke-width="0.8"/>
<ellipse cx="7.5" cy="3" rx="6.5" ry="2" fill="#e8f4fa" stroke="#a0a0a0" stroke-width="0.6"/>
</svg>
<svg class="ab" style="left:131px;top:334px" width="17" height="16" viewBox="0 0 17 16">
<path d="M0.5 0.5 H4 L5 1.5 H8 V6 H0.5Z" fill="#f4d080" stroke="#d09030" stroke-width="0.7"/>
<path d="M9 4.5 H12 L13 5.5 H16 V10 H9Z" fill="#f4d080" stroke="#d09030" stroke-width="0.7"/>
<path d="M9 10.5 H12 L13 11.5 H16 V15.5 H9Z" fill="#f4d080" stroke="#d09030" stroke-width="0.7"/>
<rect x="3" y="6.5" width="9" height="8" rx="1.2" fill="#2a7ad8" stroke="#1a5ab0" stroke-width="0.6"/><path d="M4.5 11 H10.5 M7.5 8 V14" stroke="#fff" stroke-width="1.3"/>
</svg>
<svg class="ab" style="left:154px;top:334px" width="17" height="16" viewBox="0 0 17 16">
<path d="M0.5 0.5 H4 L5 1.5 H8 V6 H0.5Z" fill="#f4d080" stroke="#d09030" stroke-width="0.7"/>
<path d="M9 4.5 H12 L13 5.5 H16 V10 H9Z" fill="#f4d080" stroke="#d09030" stroke-width="0.7"/>
<path d="M9 10.5 H12 L13 11.5 H16 V15.5 H9Z" fill="#f4d080" stroke="#d09030" stroke-width="0.7"/>
<rect x="3" y="6.5" width="9" height="8" rx="1.2" fill="#2a7ad8" stroke="#1a5ab0" stroke-width="0.6"/><path d="M4.5 11 H10.5" stroke="#fff" stroke-width="1.3"/>
</svg>
<div class="ab" style="left:174px;top:331px;width:21px;height:21px;background:#c6dcf1;border:1px solid #7eb4ea"></div>
<svg class="ab" style="left:176px;top:333px" width="17" height="17" viewBox="0 0 17 17">
<path d="M2 1 V14 M2 5.5 H8 M2 14 H8" stroke="#404040" stroke-width="0.8" stroke-dasharray="1 1.2"/>
<rect x="9" y="2.5" width="7" height="6" rx="0.8" fill="#f0b050" stroke="#c08020" stroke-width="0.6"/>
<rect x="9" y="10.5" width="7" height="6" rx="0.8" fill="#f0b050" stroke="#c08020" stroke-width="0.6"/>
<path d="M10 4 L15 7 M10 12 L15 15" stroke="#d03020" stroke-width="0.8"/>
</svg>
<svg class="ab" style="left:224px;top:335px" width="16" height="16" viewBox="0 0 16 16">
<path d="M0.5 15.5 L6 10" stroke="#808080" stroke-width="1"/>
<path d="M5 6 L10 1 L15 6 L10 11Z" fill="#e03a2a"/>
<path d="M3.5 7.5 L8.5 12.5" stroke="#e03a2a" stroke-width="2.5"/>
<path d="M7 14.5 L13 8.5" stroke="#f0c030" stroke-width="2"/>
</svg>
<div class="t" style="left:1199px;top:923.00px;font-size:11.5px;font-weight:bold;color:#000">Arduino eBay Ads:</div>
<svg class="ab" style="left:1329px;top:920px" width="17" height="17" viewBox="0 0 17 17">
<path d="M2 2 L8 8" stroke="#707070" stroke-width="1.2"/><circle cx="2" cy="2" r="1.2" fill="#d0d0d0" stroke="#707070" stroke-width="0.8"/>
<path d="M4 16.5 H12" stroke="#c0c0c0" stroke-width="0.8"/>
<path d="M8 9 L2.5 14.8" stroke="#1a6ae0" stroke-width="3.6" stroke-linecap="round"/>
<circle cx="13" cy="5" r="3.4" fill="#d8d8d8" stroke="#909090" stroke-width="1"/><circle cx="14" cy="4" r="1.3" fill="#f8f8f8"/>
<path d="M8.5 8 L11 6" stroke="#a0a0a0" stroke-width="2"/>
<path d="M7.6 7.6 L14.8 14.8" stroke="#e02a10" stroke-width="3.6" stroke-linecap="round"/>
<path d="M8 8 L14.5 14.5" stroke="#fff" stroke-width="1"/>
</svg>
<svg class="ab" style="left:1352px;top:921px" width="14" height="14" viewBox="0 0 14 14">
<rect x="0.5" y="0.5" width="13" height="13" rx="2" fill="#d82818" stroke="#a01808" stroke-width="0.8"/>
<path d="M4.5 4.5 A3.6 3.6 0 1 0 9.5 4.5" stroke="#fff" stroke-width="1.6" fill="none"/>
<path d="M7 2.5 V7" stroke="#fff" stroke-width="1.6"/>
</svg>
<svg class="ab" style="left:1091px;top:107px" width="10" height="8" viewBox="0 0 10 8"><path d="M1 6.5 L5 2.5 L9 6.5" stroke="#404040" stroke-width="2.3" fill="none"/></svg>
<svg class="ab" style="left:1091px;top:571px" width="10" height="8" viewBox="0 0 10 8"><path d="M1 1.5 L5 5.5 L9 1.5" stroke="#404040" stroke-width="2.3" fill="none"/></svg>
<div class="ab" style="left:253px;top:582px;width:22px;height:2px;background:#808080"></div>
<div class="ab" style="left:253px;top:583px;width:853px;height:2px;background:#fff"></div>
<div class="ab" style="left:253px;top:585px;width:853px;height:1px;background:#dcdcdc"></div>
<div class="ab" style="left:253px;top:582px;width:22px;height:2px;background:#808080"></div>
<div class="ab" style="left:1087px;top:102px;width:1px;height:481px;background:#fff"></div>
<div class="ab" style="left:1104px;top:102px;width:1px;height:481px;background:#fff"></div>
<div class="ab" style="left:1105px;top:587px;width:1px;height:16px;background:#d8d8d8"></div>
</body></html>
